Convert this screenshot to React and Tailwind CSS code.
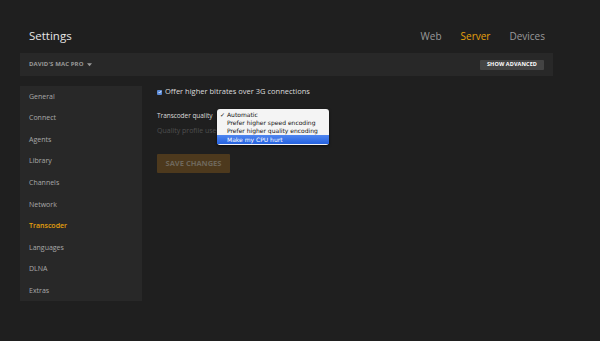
import React from "react";

const items = ["General","Connect","Agents","Library","Channels","Network","Transcoder","Languages","DLNA","Extras"];

export default function App() {
  return (
    <div className="w-[600px] h-[341px] bg-[#1f1f1f] overflow-hidden relative" style={{fontFamily: '"Open Sans", sans-serif'}}>
      <div className="flex items-end justify-between pl-[29px] pr-[55px] pt-[27px] h-[53px] pb-[10px]">
        <div className="text-[11.5px] leading-[14px] text-[#e6e6e6]">Settings</div>
        <div className="flex gap-[19px] text-[10px] leading-[14px]">
          <span className="text-[#9a9a9a]">Web</span>
          <span className="text-[#e5a00d]">Server</span>
          <span className="text-[#9a9a9a]">Devices</span>
        </div>
      </div>
      <div className="mx-[20px] w-[533px] h-[23px] bg-[#282828] flex items-center justify-between pl-[9px] pr-[9px]">
        <div className="flex items-center gap-[3px] text-[6px] font-bold text-[#9a9a9a] tracking-[0.1px]">
          DAVID'S MAC PRO
          <svg width="5" height="4" viewBox="0 0 6 4"><path d="M0 0 L6 0 L3 3.5 Z" fill="#9a9a9a"/></svg>
        </div>
        <div className="w-[64px] h-[10px] bg-[#444444] rounded-[1px] text-white text-[5.5px] font-bold flex items-center justify-center tracking-[0.1px]">SHOW ADVANCED</div>
      </div>
      <div className="flex mt-[10px] ml-[20px]">
        <div className="w-[122px] h-[215px] bg-[#282828]">
          {items.map((it) => (
            <div key={it} className={"h-[21.6px] flex items-center pl-[9px] text-[7px] " + (it === "Transcoder" ? "text-[#e5a00d] font-semibold" : "text-[#a8a8a8]")}>{it}</div>
          ))}
        </div>
        <div className="ml-[15px] pt-[1px] relative">
          <div className="flex items-center gap-[2px] h-[10px] mt-[0px]">
            <div className="w-[5px] h-[5px] bg-[#5b8ad6] rounded-[1px] flex items-center justify-center">
              <svg width="4" height="4" viewBox="0 0 4 4"><path d="M0.6 2 L1.6 3 L3.4 0.8" stroke="white" strokeWidth="0.8" fill="none"/></svg>
            </div>
            <span className="text-[7.5px] text-[#dddddd] ml-[1px]">Offer higher bitrates over 3G connections</span>
          </div>
          <div className="mt-[14px] text-[6.5px] text-[#dddddd] h-[10px] leading-[10px] tracking-[-0.05px]">Transcoder quality</div>
          <div className="mt-[5px] text-[7px] text-[#4f4f4f] h-[10px] leading-[10px]">Quality profile used</div>
          <div className="mt-[18px] w-[73px] h-[19px] bg-[#4d391d] rounded-[1px] flex items-center justify-center text-[7.5px] font-bold text-[#6e675b]">SAVE CHANGES</div>
          <div className="absolute left-[60px] top-[23px] w-[112px] h-[36px] bg-[#f4f4f4] rounded-[3px] shadow-[0_1px_3px_rgba(0,0,0,0.6)] pt-[1px]" style={{fontFamily: '"DejaVu Sans", sans-serif'}}>
            <div className="h-[8.3px] flex items-center text-[6px] text-[#111111] pl-[3px]"><span className="w-[7px]">✓</span>Automatic</div>
            <div className="h-[8.3px] flex items-center text-[6px] text-[#111111] pl-[10px]">Prefer higher speed encoding</div>
            <div className="h-[8.3px] flex items-center text-[6px] text-[#111111] pl-[10px]">Prefer higher quality encoding</div>
            <div className="h-[9px] flex items-center text-[6px] text-white pl-[10px] bg-[linear-gradient(#4f86f0,#2562e0)]">Make my CPU hurt</div>
          </div>
        </div>
      </div>
    </div>
  );
}
